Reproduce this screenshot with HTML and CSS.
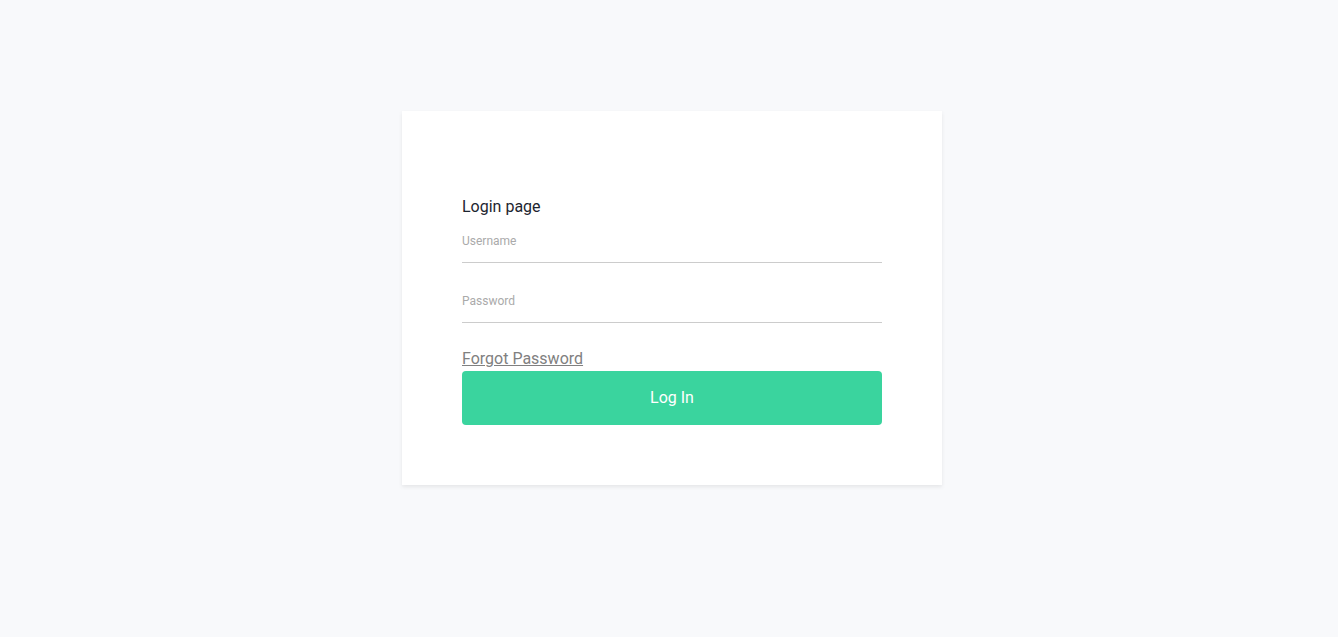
FILE: index.html
```html
<!DOCTYPE html>
<html lang="en">
<head>
<meta charset="utf-8">
<title>Login page</title>
<link rel="stylesheet" href="styles.css">
</head>
<body>
<main class="page">
  <form class="card">
    <h1 class="title">Login page</h1>
    <label class="field">
      <span class="field-label">Username</span>
      <input class="field-input" type="text">
    </label>
    <label class="field">
      <span class="field-label">Password</span>
      <input class="field-input" type="password">
    </label>
    <a class="forgot" href="#">Forgot Password</a>
    <button class="submit" type="button">Log In</button>
  </form>
</main>
</body>
</html>
```

FILE: styles.css
```css
html, body {
  margin: 0;
  padding: 0;
}
body {
  background: #f8f9fb;
  font-family: Roboto, "Liberation Sans", sans-serif;
  height: 637px;
}
.page {
  display: flex;
  justify-content: center;
  padding: 111px 0 0 6px;
}
.card {
  width: 420px;
  background: #fff;
  padding: 86px 60px 60px;
  box-shadow: 0 2px 4px rgba(0, 0, 0, 0.08);
  display: flex;
  flex-direction: column;
}
.title {
  margin: 0 0 1px;
  font-size: 16px;
  font-weight: 400;
  line-height: 20px;
  color: #1d2530;
}
.field {
  display: flex;
  flex-direction: column;
  padding-top: 16px;
  margin-bottom: 15px;
}
.field-label {
  font-size: 12px;
  line-height: 14px;
  color: #aaa;
}
.field-input {
  height: 14px;
  border: 0;
  border-bottom: 1px solid #cccccc;
  padding: 0;
  margin: 0;
  outline: none;
  font: inherit;
  background: transparent;
}
.forgot {
  margin-top: 11px;
  font-size: 16px;
  line-height: 20px;
  color: #808080;
  text-decoration: underline;
  align-self: flex-start;
}
.submit {
  margin-top: 2px;
  height: 54px;
  padding: 0 0 2px;
  border: 0;
  border-radius: 4px;
  background: #3ad49e;
  color: #fff;
  font-family: inherit;
  font-size: 16px;
  font-weight: 400;
  cursor: pointer;
}
```
